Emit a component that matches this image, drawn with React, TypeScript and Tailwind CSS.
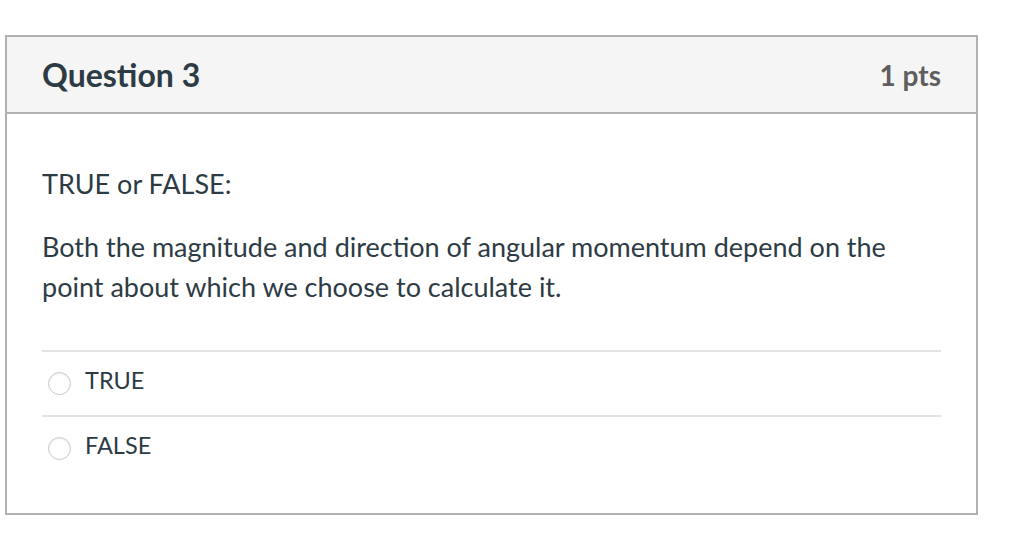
import React from 'react'

const answers = ['TRUE', 'FALSE']

const Radio = () => (
  <span className="block h-[23px] w-[23px] shrink-0 rounded-full border border-[#c9c9c9] bg-white shadow-[inset_0_1px_2px_rgba(0,0,0,0.08)]" />
)

export default function App() {
  return (
    <div className="min-h-[539px] w-full bg-white pl-[5px] pt-[35px] font-['Lato',sans-serif] text-[#2d3b45]">
      <div className="w-[973px] border-2 border-[#b1b1b1]">
        <div className="flex h-[77px] items-center justify-between border-b-2 border-[#b1b1b1] bg-[#f5f5f5] px-[35px]">
          <h2 className="text-[32px] font-bold leading-none">Question 3</h2>
          <span className="text-[28px] font-bold leading-none text-[#5e5e5e]">1 pts</span>
        </div>
        <div className="px-[35px] pb-[33px] pt-[50px]">
          <p className="text-[27px] leading-[40px]">TRUE or FALSE:</p>
          <p className="mt-[23px] text-[27px] leading-[40px]">
            Both the magnitude and direction of angular momentum depend on the point about which we
            choose to calculate it.
          </p>
          <div className="mt-[43px]">
            {answers.map((a) => (
              <div key={a} className="flex h-[65px] items-center gap-[14px] border-t-2 border-[#e3e3e3] pl-[6px]">
                <Radio />
                <span className="pb-[6px] text-[23.5px] leading-none">{a}</span>
              </div>
            ))}
          </div>
        </div>
      </div>
    </div>
  )
}
